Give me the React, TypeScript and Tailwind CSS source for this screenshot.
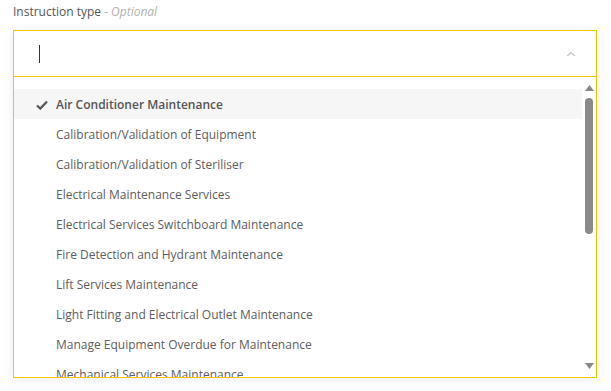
import React from "react";

const items = [
  "Air Conditioner Maintenance",
  "Calibration/Validation of Equipment",
  "Calibration/Validation of Steriliser",
  "Electrical Maintenance Services",
  "Electrical Services Switchboard Maintenance",
  "Fire Detection and Hydrant Maintenance",
  "Lift Services Maintenance",
  "Light Fitting and Electrical Outlet Maintenance",
  "Manage Equipment Overdue for Maintenance",
  "Mechanical Services Maintenance",
];

export default function App() {
  return (
    <div
      className="w-[611px] h-[391px] bg-white overflow-hidden"
      style={{ fontFamily: '"Open Sans", sans-serif' }}
    >
      <div className="pl-[13px] pr-[14px] pt-[4px]">
        <div className="text-[12px] leading-[16px] text-[#555] h-[26px]">
          Instruction type <span className="italic text-[#b0b0b0]">- Optional</span>
        </div>
        <div className="border border-[#f8c300] shadow-[0_2px_10px_rgba(0,0,0,0.08)]">
          <div className="h-[46px] flex items-center pl-[25px] pr-[20px] border-b border-[#f8c300]">
            <div className="w-px h-[18px] bg-[#333]" />
            <div className="flex-1" />
            <svg width="10" height="6" viewBox="0 0 10 6" className="mt-[1px]">
              <path d="M1 5 L5 1.5 L9 5" fill="none" stroke="#c4c4c4" strokeWidth="1.3" />
            </svg>
          </div>
          <div className="h-[300px] flex overflow-hidden">
            <div className="flex-1 pt-[12px]">
              {items.map((t, i) => (
                <div
                  key={t}
                  className={
                    "h-[30px] flex items-center text-[12px] whitespace-nowrap pt-[1px] " +
                    (i === 0 ? "bg-[#f6f6f6] font-semibold text-[#555]" : "text-[#5c5c5c]")
                  }
                >
                  <div className="w-[42px] flex justify-end pr-[8px]">
                    {i === 0 && (
                      <svg width="12" height="10" viewBox="0 0 12 10">
                        <path d="M1 5.5 L4.3 8.6 L11 1.5" fill="none" stroke="#555" strokeWidth="2.2" />
                      </svg>
                    )}
                  </div>
                  <span>{t}</span>
                </div>
              ))}
            </div>
            <div className="w-[14px] flex flex-col items-center pt-[8px] pb-[8px]">
              <svg width="9" height="6" viewBox="0 0 9 6">
                <path d="M0 6 L4.5 0 L9 6 Z" fill="#888" />
              </svg>
              <div className="w-[8px] h-[136px] bg-[#8a8a8a] rounded-full mt-[7px]" />
              <div className="flex-1" />
              <svg width="9" height="6" viewBox="0 0 9 6">
                <path d="M0 0 L9 0 L4.5 6 Z" fill="#888" />
              </svg>
            </div>
          </div>
        </div>
      </div>
    </div>
  );
}
